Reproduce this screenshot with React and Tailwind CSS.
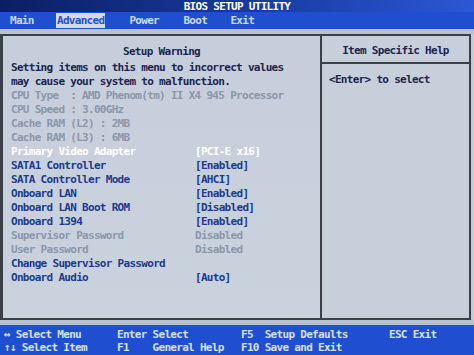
import React from 'react'

const rows = [
    { label: 'Setting items on this menu to incorrect values', tone: 'dark' },
    { label: 'may cause your system to malfunction.', tone: 'dark' },
    { label: 'CPU Type  : AMD Phenom(tm) II X4 945 Processor', tone: 'muted' },
    { label: 'CPU Speed : 3.00GHz', tone: 'muted' },
    { label: 'Cache RAM (L2) : 2MB', tone: 'muted' },
    { label: 'Cache RAM (L3) : 6MB', tone: 'muted' },
    { label: 'Primary Video Adapter', value: '[PCI-E x16]', tone: 'active' },
    { label: 'SATA1 Controller', value: '[Enabled]', tone: 'item' },
    { label: 'SATA Controller Mode', value: '[AHCI]', tone: 'item' },
    { label: 'Onboard LAN', value: '[Enabled]', tone: 'item' },
    { label: 'Onboard LAN Boot ROM', value: '[Disabled]', tone: 'item' },
    { label: 'Onboard 1394', value: '[Enabled]', tone: 'item' },
    { label: 'Supervisor Password', value: 'Disabled', tone: 'muted' },
    { label: 'User Password', value: 'Disabled', tone: 'muted' },
    { label: 'Change Supervisor Password', tone: 'item' },
    { label: 'Onboard Audio', value: '[Auto]', tone: 'item' },
]

const toneClass = {
    dark: 'text-[#1b2550]',
    muted: 'text-[#8b97ab]',
    active: 'text-white',
    item: 'text-[#1d3a8f]',
}

const App = () => {
    return (
        <div
            className="w-[474px] h-[355px] flex flex-col bg-[#c3cbd7] overflow-hidden font-bold text-[11px] tracking-[-0.7px] whitespace-pre"
            style={{ fontFamily: '"DejaVu Sans Mono", "Liberation Mono", monospace' }}
        >
            {/* Title */}
            <div className="h-[12px] flex items-center justify-center bg-gradient-to-r from-[#0b1f63] via-[#17389c] to-[#2c58d6] text-white leading-none">
                BIOS SETUP UTILITY
            </div>

            {/* Menu */}
            <div className="h-[17px] flex items-center bg-[#1f4fd0] text-[#c9d8ff] leading-none pl-[10px]">
                <span className="w-[47px]">Main</span>
                <span className="-ml-[1px] bg-[#d4dae4] text-[#1f4fd0] h-[15px] flex items-center px-[1px]">Advanced</span>
                <span className="w-[54px] ml-[24px]">Power</span>
                <span className="w-[47px]">Boot</span>
                <span>Exit</span>
            </div>

            <div className="h-[5px] bg-[#b9c2cf]" />

            {/* Panels */}
            <div className="flex h-[286px]">
                <div className="w-[320px] flex flex-col border-y-2 border-l-[3px] border-[#3b3f48] bg-gradient-to-b from-[#c6cedb] to-[#cad2de] leading-[14px]">
                    <div className="pt-[9px] h-[23px] text-center text-[#1b2550]">Setup Warning</div>
                    <div className="flex flex-col pl-[8px] pt-[2px]">
                        {rows.map((row) => (
                            <div key={row.label} className={`flex h-[14px] ${toneClass[row.tone]}`}>
                                <span className="w-[184px] shrink-0">{row.label}</span>
                                {row.value && <span>{row.value}</span>}
                            </div>
                        ))}
                    </div>
                </div>
                <div className="w-[151px] flex flex-col border-2 border-[#3b3f48] bg-[#c7cfdb] leading-[14px] text-[#1b2550]">
                    <div className="h-[28px] pt-[8px] text-center border-b-2 border-[#3b3f48]">Item Specific Help</div>
                    <div className="pt-[9px] pl-[7px]">{'<Enter> to select'}</div>
                </div>
            </div>

            <div className="h-[5px] bg-[#b9c2cf]" />

            {/* Footer */}
            <div className="flex-1 bg-[#1f4fd0] text-[#d6e0ff] leading-[13px] pt-[3px] pl-[4px]">
                <div className="flex">
                    <span className="w-[113px]">↔ Select Menu</span>
                    <span className="w-[124px]">Enter Select</span>
                    <span className="w-[148px]">F5  Setup Defaults</span>
                    <span>ESC Exit</span>
                </div>
                <div className="flex">
                    <span className="w-[113px]">↑↓ Select Item</span>
                    <span className="w-[124px]">F1    General Help</span>
                    <span>F10 Save and Exit</span>
                </div>
            </div>
        </div>
    )
}

export default App
